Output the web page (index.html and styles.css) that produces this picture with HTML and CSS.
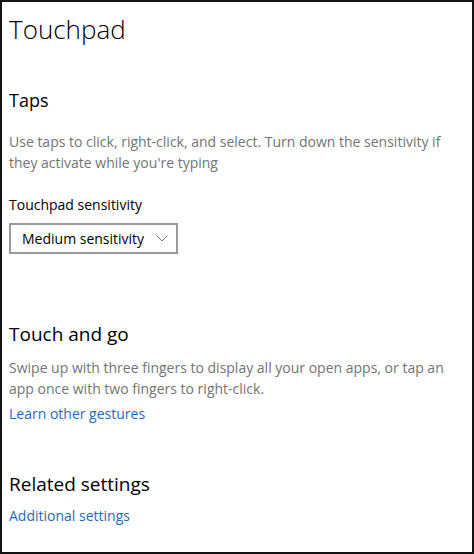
FILE: index.html
```html
<!DOCTYPE html>
<html>
<head>
<meta charset="utf-8">
<link rel="stylesheet" href="styles.css">
</head>
<body>
<div class="frame">
  <h1 class="title">Touchpad</h1>
  <section class="taps">
    <h2 class="heading">Taps</h2>
    <p class="desc">Use taps to click, right-click, and select. Turn down the sensitivity if they activate while you're typing</p>
    <div class="label">Touchpad sensitivity</div>
    <div class="select">
      <span class="value">Medium sensitivity</span>
      <svg class="chev" width="12" height="7" viewBox="0 0 12 7"><path d="M0.5 0.5 L6 6 L11.5 0.5" fill="none" stroke="#777" stroke-width="1"/></svg>
    </div>
  </section>
  <section class="touch">
    <h2 class="heading mid">Touch and go</h2>
    <p class="desc">Swipe up with three fingers to display all your open apps, or tap an app once with two fingers to right-click.</p>
    <a class="link">Learn other gestures</a>
  </section>
  <section class="related">
    <h2 class="heading mid">Related settings</h2>
    <a class="link">Additional settings</a>
  </section>
</div>
</body>
</html>
```
FILE: styles.css
```css
html, body { margin: 0; padding: 0; background: #fff; }
body { font-family: "Open Sans", "Noto Sans", sans-serif; }
.frame {
  box-sizing: border-box;
  width: 474px;
  height: 554px;
  border: 2px solid #141414;
  padding: 0 10px 0 7px;
  color: #000;
  overflow: hidden;
}
.title {
  margin: 9px 0 0 0;
  font-size: 26px;
  font-weight: 300;
  line-height: 36px;
}
.heading {
  margin: 0;
  font-size: 18px;
  font-weight: 400;
  line-height: 24px;
}
.mid { font-size: 19px; }
.taps { margin-top: 41px; }
.desc {
  margin: 0;
  font-size: 14px;
  line-height: 21px;
  color: #747474;
}
.taps .desc { margin-top: 19px; }
.label { margin-top: 22px; font-size: 14px; line-height: 20px; }
.select {
  margin-top: 8px;
  box-sizing: border-box;
  width: 169px;
  height: 31px;
  border: 2px solid #9a9a9a;
  display: flex;
  align-items: center;
  justify-content: space-between;
  padding: 0 8px 0 11px;
  font-size: 14px;
  white-space: nowrap;
}
.chev { flex: none; }
.touch { margin-top: 68px; }
.touch .desc { margin-top: 11px; line-height: 21px; }
.link {
  display: block;
  color: #1e6cb6;
  font-size: 14px;
  line-height: 20px;
  margin-top: 5px;
}
.related { margin-top: 48px; }
.related .link { margin-top: 10px; }
```
